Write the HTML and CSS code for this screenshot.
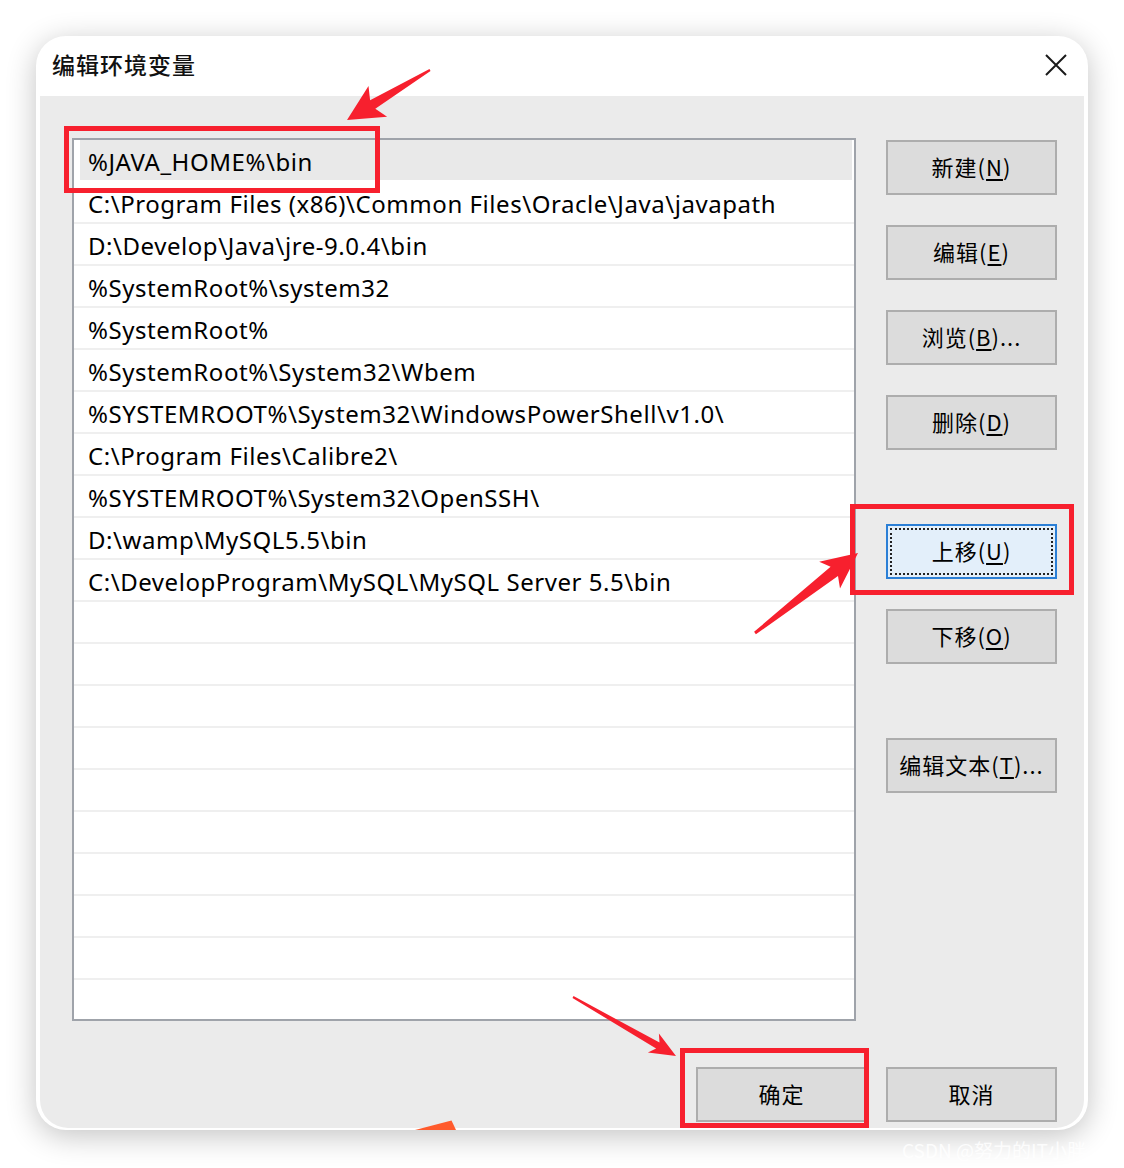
FILE: index.html
```html
<!DOCTYPE html>
<html lang="zh-CN">
<head>
<meta charset="utf-8">
<title>编辑环境变量</title>
<link rel="stylesheet" href="styles.css">
</head>
<body>
<div class="page">
  <div class="dialog">
    <div class="titlebar">
      <span class="title">编辑环境变量</span>
      <svg class="close" width="22" height="22" viewBox="0 0 22 22"><path d="M1 1 L21 21 M21 1 L1 21" stroke="#1a1a1a" stroke-width="2" fill="none"/></svg>
    </div>
    <div class="body">
      <div class="main">
        <div class="list">
          <div class="row selected">%JAVA_HOME%\bin</div>
          <div class="row">C:\Program Files (x86)\Common Files\Oracle\Java\javapath</div>
          <div class="row">D:\Develop\Java\jre-9.0.4\bin</div>
          <div class="row">%SystemRoot%\system32</div>
          <div class="row">%SystemRoot%</div>
          <div class="row">%SystemRoot%\System32\Wbem</div>
          <div class="row">%SYSTEMROOT%\System32\WindowsPowerShell\v1.0\</div>
          <div class="row">C:\Program Files\Calibre2\</div>
          <div class="row">%SYSTEMROOT%\System32\OpenSSH\</div>
          <div class="row">D:\wamp\MySQL5.5\bin</div>
          <div class="row">C:\DevelopProgram\MySQL\MySQL Server 5.5\bin</div>
          <div class="row"></div>
          <div class="row"></div>
          <div class="row"></div>
          <div class="row"></div>
          <div class="row"></div>
          <div class="row"></div>
          <div class="row"></div>
          <div class="row"></div>
          <div class="row"></div>
          <div class="row"></div>
        </div>
        <div class="side">
          <button class="btn">新建(<u>N</u>)</button>
          <button class="btn">编辑(<u>E</u>)</button>
          <button class="btn">浏览(<u>B</u>)...</button>
          <button class="btn">删除(<u>D</u>)</button>
          <button class="btn focused group">上移(<u>U</u>)</button>
          <button class="btn">下移(<u>O</u>)</button>
          <button class="btn group">编辑文本(<u>T</u>)...</button>
        </div>
      </div>
      <div class="footer">
        <button class="btn ok">确定</button>
        <button class="btn">取消</button>
      </div>
    </div>
  </div>

  <div class="mark mark-row"></div>
  <div class="mark mark-up"></div>
  <div class="mark mark-ok"></div>

  <svg class="arrows" width="1124" height="1168" viewBox="0 0 1124 1168">
    <polygon fill="#f7202e" points="347,120 387.1,116.8 375.3,108.8 430.5,70.9 429.5,69.1 370.1,100.2 368.5,86"/>
    <polygon fill="#f7202e" points="858,553 840,588.5 838,576.1 755.9,634.2 754.1,631.8 830.6,566.7 819.2,561.7"/>
    <polygon fill="#f7202e" points="676,1056 658.9,1033.6 659.5,1042.6 573.5,996.1 572.5,997.9 656.1,1048.6 647.9,1052.6"/>
    <polygon fill="#ff5a2c" points="415,1130 451.5,1120.5 456,1130"/>
  </svg>

  <div class="watermark">CSDN @努力的IT小胖</div>
</div>
</body>
</html>
```

FILE: styles.css
```css
* {
  box-sizing: border-box;
}

html, body {
  margin: 0;
  padding: 0;
  background: #ffffff;
}

.page {
  position: relative;
  width: 1124px;
  height: 1168px;
  padding: 36px 36px 0 36px;
  overflow: hidden;
}

.dialog {
  width: 1052px;
  height: 1094px;
  background: #ffffff;
  border-radius: 30px;
  box-shadow: 0 6px 30px rgba(0, 0, 0, 0.24);
  display: flex;
  flex-direction: column;
}

.titlebar {
  height: 60px;
  display: flex;
  align-items: center;
  justify-content: space-between;
  padding: 0 21px 0 16px;
}

.title {
  font-family: "Noto Sans CJK SC", "Noto Sans", sans-serif;
  font-size: 23px;
  font-weight: 500;
  letter-spacing: 1px;
  color: #111;
  line-height: 1;
  margin-top: -3px;
}

.close {
  display: block;
  margin-top: -3px;
}

.body {
  flex: 1;
  margin: 0 4px 2px 4px;
  background: #ebebeb;
  border-radius: 0 0 28px 28px;
  padding: 42px 27px 0 32px;
}

.main {
  display: flex;
  gap: 30px;
}

.list {
  width: 784px;
  height: 883px;
  border: 2px solid #9fa3aa;
  background: #ffffff;
  overflow: hidden;
}

.row {
  height: 42px;
  line-height: 40px;
  padding-top: 2px;
  border-bottom: 2px solid #efefef;
  padding-left: 14px;
  font-family: "Noto Sans", "Noto Sans CJK SC", sans-serif;
  font-size: 24px;
  letter-spacing: 0.55px;
  color: #000;
  white-space: nowrap;
}

.row.selected {
  background: linear-gradient(to right, #ffffff 6px, #e9e9e9 6px, #e9e9e9 calc(100% - 2px), #ffffff calc(100% - 2px));
  border-bottom-color: #ffffff;
}

.side {
  width: 171px;
  display: flex;
  flex-direction: column;
  gap: 30px;
  padding-top: 2px;
}

.side .group {
  margin-top: 44px;
}

.btn {
  position: relative;
  width: 171px;
  height: 55px;
  background: #dcdcdc;
  border: 2px solid #adadad;
  border-radius: 0;
  font-family: "Noto Sans CJK SC", "Noto Sans", sans-serif;
  font-size: 22px;
  letter-spacing: 1px;
  color: #000;
  padding: 0 0 4px 0;
  display: flex;
  align-items: center;
  justify-content: center;
  line-height: 1;
}

.btn u {
  text-decoration-thickness: 1.5px;
  text-underline-offset: 3px;
}

.btn.focused {
  background: #e3effa;
  border-color: #2b7fd6;
}

.btn.focused::after {
  content: "";
  position: absolute;
  inset: 2px;
  border: 2px dotted #222;
}

.footer {
  margin-top: 46px;
  display: flex;
  justify-content: flex-end;
  gap: 19px;
}

.mark {
  position: absolute;
  border: 5px solid #f7202e;
}

.mark-row {
  left: 64px;
  top: 126px;
  width: 316px;
  height: 67px;
}

.mark-up {
  left: 850px;
  top: 504px;
  width: 224px;
  height: 91px;
}

.mark-ok {
  left: 680px;
  top: 1048px;
  width: 189px;
  height: 80px;
}

.arrows {
  position: absolute;
  left: 0;
  top: 0;
  pointer-events: none;
}

.watermark {
  position: absolute;
  left: 902px;
  top: 1136px;
  font-family: "Noto Sans CJK SC", "Noto Sans", sans-serif;
  font-size: 19px;
  color: rgba(255, 255, 255, 0.85);
  white-space: nowrap;
}
```
